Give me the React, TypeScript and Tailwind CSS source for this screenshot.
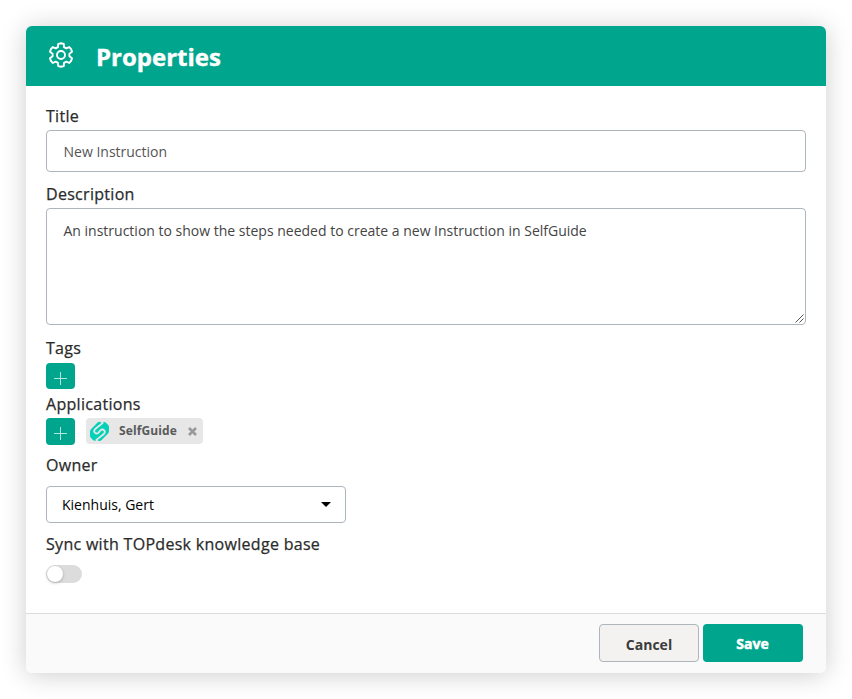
import type { ReactNode } from "react";

const polar = (radius: number, degrees: number) => {
  const angle = (degrees * Math.PI) / 180;
  return `${(13 + radius * Math.cos(angle)).toFixed(2)} ${(13 + radius * Math.sin(angle)).toFixed(2)}`;
};

const gearPath =
  "M" +
  [-90, -30, 30, 90, 150, 210]
    .map((a) => [polar(8.5, a - 21), polar(11.5, a - 14), polar(11.7, a), polar(11.5, a + 14), polar(8.5, a + 21)].join("L"))
    .join("L") +
  "Z";

function GearIcon() {
  return (
    <svg className="mb-[2px] size-[26px]" viewBox="0 0 26 26" fill="none" stroke="white" strokeWidth="1.9" strokeLinejoin="round">
      <path d={gearPath} />
      <circle cx="13" cy="13" r="4" />
    </svg>
  );
}

function Label({ className, children }: { className: string; children: ReactNode }) {
  return (
    <div
      className={`text-[16px] leading-[22px] font-medium tracking-[0.3px] text-[#2b2b2b] [-webkit-text-stroke:0.25px_#2b2b2b] ${className}`}
    >
      {children}
    </div>
  );
}

function AddButton({ className }: { className: string }) {
  return (
    <button className={`flex w-[29px] items-end justify-center rounded-[4px] bg-[#00a58d] ${className}`}>
      <svg className="h-[13px] w-[13px]" viewBox="0 0 13 13" stroke="#b5e4dd" strokeWidth="1">
        <path d="M0 6.5H13M6.5 0V13" />
      </svg>
    </button>
  );
}

function SelfGuideLogo() {
  return (
    <svg className="size-[21px]" viewBox="0 0 21 21" fill="none">
      <path
        d="M8.6 1.5Q10.4 .2 12 1.4L13 2.2L14.2 1.4Q15.6 .6 17 1.8L19.4 4.2Q20.3 5.3 20 7V10Q20 11.6 18.8 12.8L12.4 19.2Q10.8 20.6 9 19.4L8 18.6L6.8 19.4Q5.4 20.2 4 19L1.6 16.6Q.6 15.5 1 13.8V10.8Q.9 9.2 2.2 8Z"
        fill="#04d1b8"
      />
      <path
        d="M14.2 1.6L6.2 8Q4.2 10 6 11.8Q7.6 13.2 9.4 11.8L11.6 9.2Q13.4 7.8 15 9.2Q16.8 11 14.8 13L6.8 19.4"
        stroke="#e7e7e7"
        strokeWidth="1.7"
      />
    </svg>
  );
}

export default function App() {
  return (
    <div className="h-[699px] w-[852px] overflow-hidden bg-white p-[26px] font-['Open_Sans','Noto_Sans',sans-serif]">
      <div className="flex h-[647px] w-[800px] flex-col overflow-hidden rounded-[6px] bg-white shadow-[0_2px_26px_rgba(0,0,0,0.2)]">
        <header className="flex h-[60px] shrink-0 items-center bg-[#00a58d] pl-[22px]">
          <GearIcon />
          <h1 className="ml-[22px] pt-[2px] text-[24px] leading-[32px] font-bold text-white [-webkit-text-stroke:0.4px_white]">
            Properties
          </h1>
        </header>

        <main className="flex grow flex-col px-5 pt-[19px]">
          <Label className="">Title</Label>
          <div className="mt-[3px] flex h-[42px] items-center rounded-[4px] border border-[#adb5bd] px-[16.5px] pt-px text-[14px] text-[#555]">
            New Instruction
          </div>
          <Label className="mt-[11px]">Description</Label>
          <div className="mt-[3px] flex h-[117px] justify-between rounded-[4px] border border-[#adb5bd] pl-[16.5px]">
            <p className="pt-[12px] text-[14px] leading-[20px] text-[#444]">
              An instruction to show the steps needed to create a new Instruction in SelfGuide
            </p>
            <svg className="mr-px mb-px size-[9px] self-end" viewBox="0 0 9 9" stroke="#555" strokeWidth="1">
              <path d="M.5 8.5L8.5 .5M4.5 8.5L8.5 4.5" />
            </svg>
          </div>
          <Label className="mt-[12px]">Tags</Label>
          <AddButton className="mt-[4px] h-[26px] pb-[4px]" />
          <Label className="mt-[4px]">Applications</Label>
          <div className="mt-[3px] flex h-[27px] gap-[11px]">
            <AddButton className="h-[27px] pb-[5px]" />
            <div className="flex h-[26px] w-[117px] items-center rounded-[4px] bg-[#e7e7e7] pl-[3px]">
              <SelfGuideLogo />
              <span className="ml-[9px] w-[58px] text-[12px] font-bold tracking-[0.1px] whitespace-nowrap text-[#5a5a5a]">
                SelfGuide
              </span>
              <svg className="ml-[11px] size-[9px]" viewBox="0 0 9 9" stroke="#999" strokeWidth="2.6">
                <path d="M1 1L8 8M8 1L1 8" />
              </svg>
            </div>
          </div>
          <Label className="mt-[9px]">Owner</Label>
          <div className="mt-[10px] flex h-[37px] w-[300px] items-center justify-between rounded-[4px] border border-[#adb5bd] pr-[14px] pl-[15px] text-[14px] text-black">
            <span>Kienhuis, Gert</span>
            <svg className="h-[5px] w-[10px]" viewBox="0 0 10 5">
              <path d="M0 0H10L5 5Z" />
            </svg>
          </div>
          <Label className="mt-[10px]">Sync with TOPdesk knowledge base</Label>
          <div className="mt-[10px] flex h-[18px] w-[36px] items-center rounded-full bg-[#dcdcdc] pl-px">
            <div className="size-[16px] rounded-full bg-white shadow-[0_1px_3px_rgba(0,0,0,0.25)]" />
          </div>
        </main>

        <footer className="flex h-[60px] shrink-0 justify-end gap-[4px] border-t border-[#dcdcdc] bg-[#fafafa] pt-[10px] pr-[23px] text-[14px] font-bold">
          <button className="h-[38px] w-[100px] rounded-[4px] border border-[#adb5bd] bg-[#f3f2f1] pt-[3px] text-[#3b3b3b]">
            Cancel
          </button>
          <button className="h-[38px] w-[100px] rounded-[4px] bg-[#00a58d] pr-px pt-px text-white [-webkit-text-stroke:0.5px_white]">
            Save
          </button>
        </footer>
      </div>
    </div>
  );
}
